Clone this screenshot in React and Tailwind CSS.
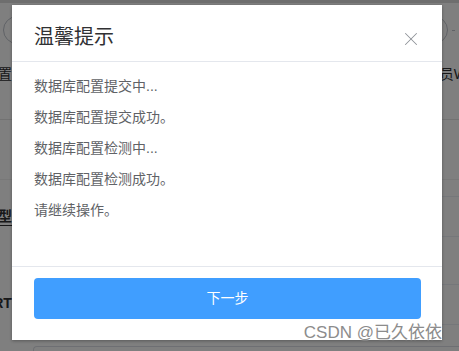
import { X } from 'lucide-react';

const lines = [
  '数据库配置提交中...',
  '数据库配置提交成功。',
  '数据库配置检测中...',
  '数据库配置检测成功。',
  '请继续操作。',
];

const font = { fontFamily: '"Liberation Sans", "Noto Sans CJK SC", sans-serif' };

// page behind the mask, mostly hidden by the dialog
const Background = () => (
  <div className="w-[459px] h-[351px] bg-white flex flex-col overflow-hidden text-[14px] text-[#303133]" style={font}>
    <div className="h-[3px] bg-[#dcdcdc]" />
    <div className="h-[117px] flex flex-col border-b border-[#e4e4e4]">
      <div className="flex justify-between items-center mt-[13px] h-[28px]">
        <div className="w-[28px] h-[28px] rounded-full border border-[#c0c4cc] ml-[3px]" />
        <div className="flex items-center mr-[4px]">
          <div className="w-[28px] h-[28px] rounded-full border border-[#c0c4cc] -mr-[2px]" />
          <div className="w-[3px] h-[1px] bg-[#c0c4cc] ml-[6px]" />
        </div>
      </div>
      <div className="flex justify-between mt-[22px] leading-[16px]">
        <span className="-ml-[16px]">配置</span>
        <span className="-mr-[8px]">人员W</span>
      </div>
    </div>
    <div className="h-[60px] border-b border-[#f0f0f0]" />
    <div className="h-[17px] flex justify-end">
      <div className="w-[20px] border-b border-[#ebeef5]" />
    </div>
    <div className="h-[40px] flex justify-between">
      <span className="-ml-[16px] mt-[10px] font-bold border-b border-[#303133] h-[19px] leading-[18px]">类型</span>
      <div className="w-[20px] border-b border-[#ebeef5]" />
    </div>
    <div className="h-[48px] flex justify-end">
      <div className="w-[20px] border-b border-[#ebeef5]" />
    </div>
    <div className="h-[40px] flex justify-between">
      <span className="-ml-[27px] mt-[8px] font-bold text-[14px]">PORT</span>
      <div className="w-[20px] border-b border-[#ebeef5]" />
    </div>
    <div className="flex-1 flex flex-col justify-end">
      <div className="ml-[33px] h-[5px] border-t border-l border-[#dcdfe6] rounded-tl-[4px]" />
    </div>
  </div>
);

export default function App() {
  return (
    <div className="relative w-[459px] h-[351px] overflow-hidden" style={font}>
      <Background />
      <div className="absolute inset-0 bg-black/50" />

      <div className="absolute left-[12px] top-[5px] w-[430px] h-[335px] bg-white flex flex-col shadow-[0_1px_3px_rgba(0,0,0,0.3)]">
        <div className="h-[56px] flex items-start justify-between pl-[22px] pr-[20px] pt-[20px]">
          <span className="text-[20px] leading-[24px] text-[#303133]">温馨提示</span>
          <X className="w-[22px] h-[22px] text-[#909399] mt-[3px]" strokeWidth={1.1} />
        </div>
        <div className="h-px bg-[#e4e7ed]" />
        <div className="h-[204px] pl-[22px] pt-[9px] text-[14px] text-[#606266]">
          {lines.map((t) => (
            <p key={t} className="leading-[31px]">{t}</p>
          ))}
        </div>
        <div className="h-px bg-[#e4e7ed]" />
        <div className="flex-1 pl-[22px] pr-[21px] pt-[11px]">
          <button className="w-full h-[41px] rounded-[4px] bg-[#409eff] text-white text-[14px]">
            下一步
          </button>
        </div>
      </div>

      <div className="absolute right-[17px] bottom-[9px] text-[17px] leading-[19px] text-[#8c8c8c] [text-shadow:0_0_1px_#fff,0_0_1px_#fff]">
        CSDN @已久依依
      </div>
    </div>
  );
}
